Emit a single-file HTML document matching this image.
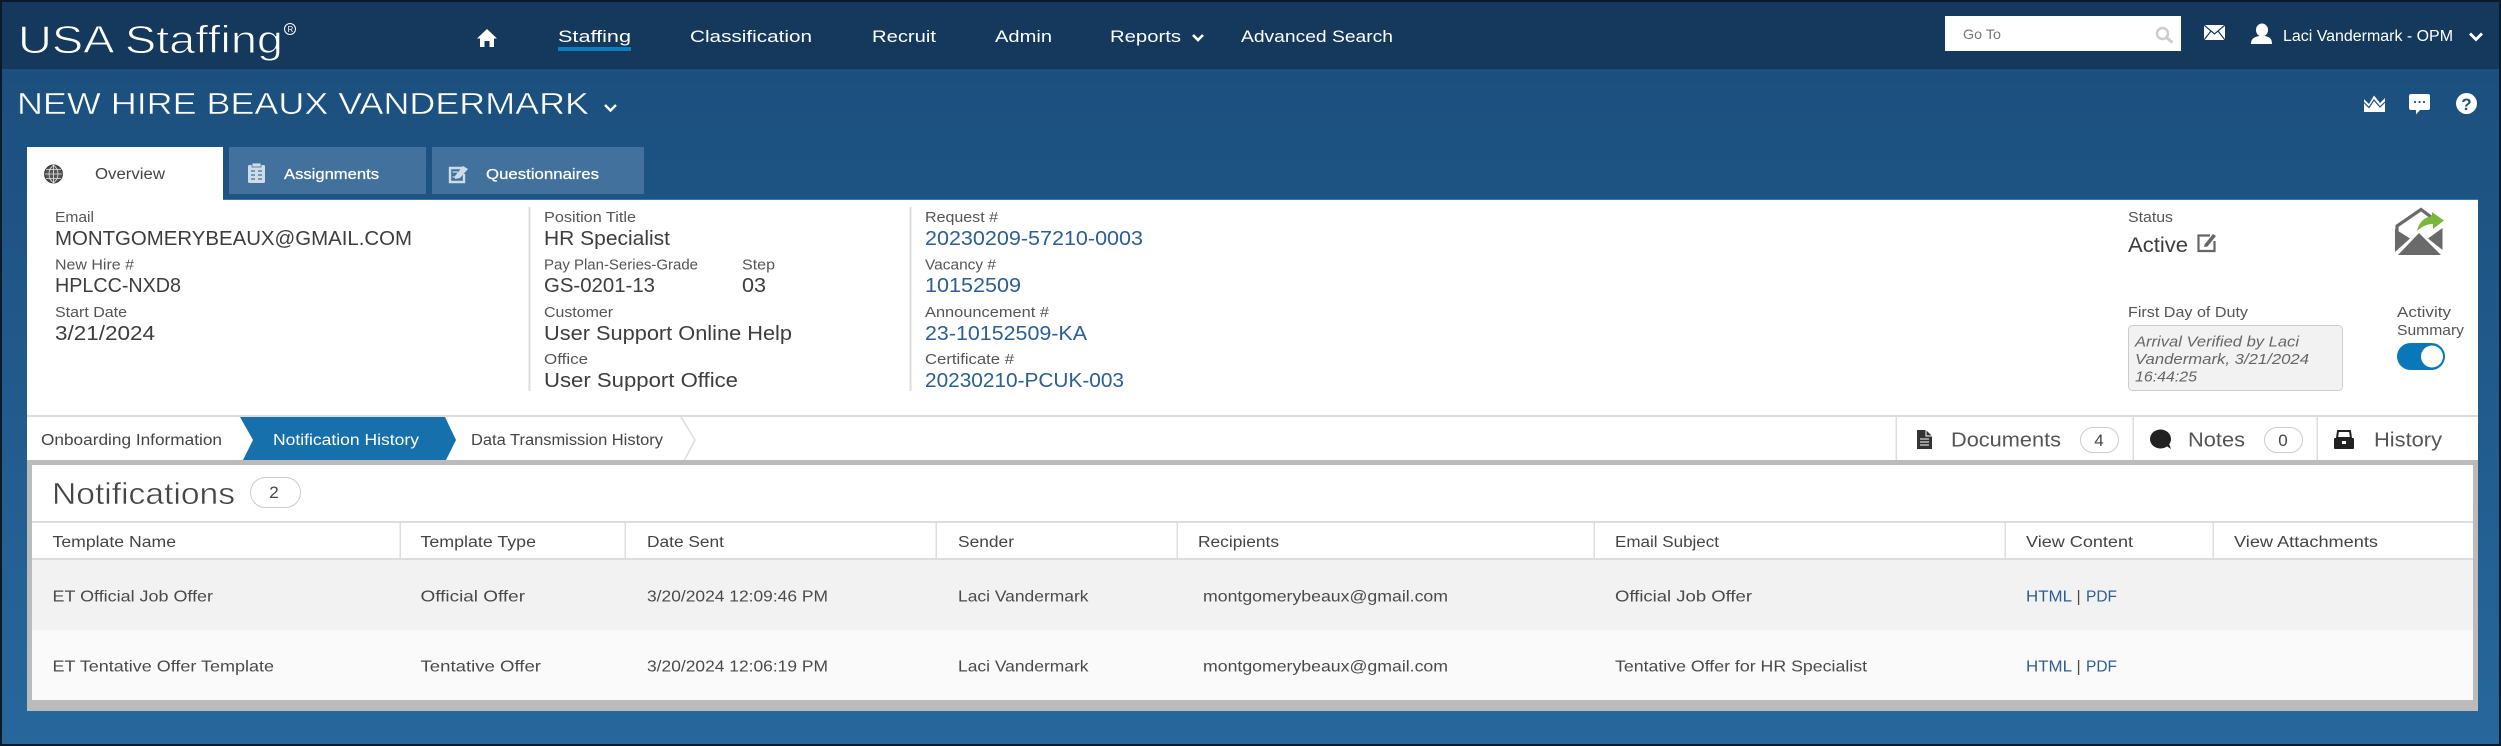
<!DOCTYPE html>
<html lang="en">
<head>
<meta charset="utf-8">
<title>USA Staffing - New Hire</title>
<style>
html,body{margin:0;padding:0;background:#000;width:2501px;height:746px;overflow:hidden}
svg{display:block}
text{font-family:"Liberation Sans",sans-serif;white-space:pre}
.nav{font-size:17px;fill:#fff}
.lb{font-size:14.5px;fill:#555}
.val{font-size:20px;fill:#3d3d3d}
.lnk{font-size:20px;fill:#2c5f92}
.th{font-size:15.5px;fill:#444}
.td{font-size:16px;fill:#4a4a4a}
.a{font-size:16px;fill:#2c5f92}
.bc{font-size:15.5px;fill:#444}
.tab{font-size:15px;fill:#fff;stroke:#fff;stroke-width:.25}
.it{font-size:15px;fill:#666;font-style:italic}
.rt{font-size:20px;fill:#555}
.bd{font-size:17px;fill:#444;text-anchor:middle}
</style>
</head>
<body>
<svg xmlns="http://www.w3.org/2000/svg" width="2501" height="746" viewBox="0 0 2501 746">
<defs>
<linearGradient id="bg" x1="0" y1="0" x2="0" y2="1"><stop offset="0" stop-color="#1b4f7e"/><stop offset="1" stop-color="#27679b"/></linearGradient>
</defs>
<rect width="2501" height="746" fill="#0a1a28"/>
<rect x="2" y="69" width="2497" height="675" fill="url(#bg)"/>
<rect x="2" y="2" width="2497" height="67" fill="#14395c"/>

<!-- logo -->
<text x="18" y="53" font-size="39" fill="#fff" stroke="#14395c" stroke-width=".9" textLength="265" lengthAdjust="spacingAndGlyphs">USA Staffing</text>
<circle cx="290" cy="29" r="5.5" fill="none" stroke="#fff" stroke-width="1"/>
<text x="287.5" y="32" font-size="8" fill="#fff">R</text>

<!-- nav -->
<path d="M487 29 L497 38.5 L494 38.5 L494 47 L489.5 47 L489.5 41 L484.5 41 L484.5 47 L480 47 L480 38.5 L477 38.5Z" fill="#fff"/>
<text class="nav" x="558" y="42" textLength="73" lengthAdjust="spacingAndGlyphs">Staffing</text>
<rect x="558" y="47" width="73" height="4" fill="#0a7fc4"/>
<text class="nav" x="690" y="42" textLength="122" lengthAdjust="spacingAndGlyphs">Classification</text>
<text class="nav" x="872" y="42" textLength="64" lengthAdjust="spacingAndGlyphs">Recruit</text>
<text class="nav" x="995" y="42" textLength="57" lengthAdjust="spacingAndGlyphs">Admin</text>
<text class="nav" x="1110" y="42" textLength="71" lengthAdjust="spacingAndGlyphs">Reports</text>
<path d="M1193 35 L1198 40 L1203 35" fill="none" stroke="#fff" stroke-width="2.6"/>
<text class="nav" x="1241" y="42" textLength="152" lengthAdjust="spacingAndGlyphs">Advanced Search</text>

<!-- search -->
<rect x="1945" y="16" width="236" height="35" fill="#fff"/>
<text x="1963" y="39" font-size="14" fill="#777" textLength="38" lengthAdjust="spacingAndGlyphs">Go To</text>
<circle cx="2162.5" cy="33.5" r="5.5" fill="none" stroke="#ccc" stroke-width="2.4"/>
<path d="M2167 38 L2172.5 42.5" stroke="#ccc" stroke-width="3"/>

<!-- mail -->
<rect x="2204" y="25" width="21" height="15" fill="#fff"/>
<path d="M2204 25 L2214.5 34 L2225 25 M2204 40 L2211 31 M2225 40 L2218 31" fill="none" stroke="#14395c" stroke-width="1.2"/>
<!-- user -->
<ellipse cx="2262" cy="30" rx="6" ry="6.5" fill="#fff"/>
<path d="M2251 44 C2251 38 2255 37 2259 36 L2265 36 C2269 37 2272 38 2272 44Z" fill="#fff"/>
<text x="2283" y="41" font-size="15.5" fill="#fff" textLength="170" lengthAdjust="spacingAndGlyphs">Laci Vandermark - OPM</text>
<path d="M2470 33.5 L2476 39.5 L2482 33.5" fill="none" stroke="#fff" stroke-width="2.8"/>

<!-- title -->
<text x="17" y="114" font-size="31" fill="#fff" stroke="#1c527f" stroke-width=".5" textLength="572" lengthAdjust="spacingAndGlyphs">NEW HIRE BEAUX VANDERMARK</text>
<path d="M605 105 L610.5 110.5 L616 105" fill="none" stroke="#fff" stroke-width="2.4"/>

<!-- page icons -->
<path d="M2364 99 L2369 104 L2374 95.5 L2380 103 L2385 98 L2385 112 L2364 112Z" fill="#fff"/>
<path d="M2364 102.5 L2369 107.5 L2374 100 L2380 107 L2385 102" fill="none" stroke="#1c527f" stroke-width="1.2"/>
<path d="M2411 94 H2428 Q2430 94 2430 96 V108 Q2430 110 2428 110 H2420 L2416 114.5 V110 H2411 Q2409 110 2409 108 V96 Q2409 94 2411 94Z" fill="#fff"/>
<circle cx="2415" cy="102" r="1.1" fill="#1c527f"/><circle cx="2419.5" cy="102" r="1.1" fill="#1c527f"/><circle cx="2424" cy="102" r="1.1" fill="#1c527f"/>
<circle cx="2466.5" cy="103.5" r="10.5" fill="#fff"/>
<text x="2466.5" y="110" font-size="17" font-weight="bold" fill="#1c527f" text-anchor="middle">?</text>

<!-- tabs -->
<rect x="27" y="147" width="196" height="54" fill="#fff"/>
<rect x="229" y="147" width="197" height="47" fill="#41719c"/>
<rect x="432" y="147" width="212" height="47" fill="#41719c"/>
<g fill="none" stroke="#3a3a3a" stroke-width="1.3">
<circle cx="53.5" cy="174" r="8.8" fill="#555"/>
<path d="M44.7 174 H62.3 M46 169.5 H61 M46 178.5 H61 M53.5 165 V183 M53.5 165 C47.5 170 47.5 178 53.5 183 M53.5 165 C59.5 170 59.5 178 53.5 183" stroke="#e8e8e8" stroke-width=".8"/>
</g>
<text class="bc" x="95" y="179" textLength="70" lengthAdjust="spacingAndGlyphs">Overview</text>
<rect x="248" y="165" width="17" height="18" rx="1.5" fill="#cfdbe6"/>
<rect x="252" y="163" width="9" height="4" fill="#cfdbe6" stroke="#41719c" stroke-width=".8"/>
<path d="M251 171 H255 M258 171 H262 M251 175 H255 M258 175 H262 M251 179 H255 M258 179 H262" stroke="#41719c" stroke-width="1.2"/>
<text class="tab" x="284" y="179" textLength="95" lengthAdjust="spacingAndGlyphs">Assignments</text>
<path d="M464 168 H450 V182 H464 V174" fill="none" stroke="#cfdbe6" stroke-width="2.4"/>
<path d="M455 176 L463 166 L468 169 L460 178 L455 179Z" fill="#cfdbe6"/>
<path d="M452.5 172 H458 M452.5 177 H455" stroke="#cfdbe6" stroke-width="1.2"/>
<text class="tab" x="486" y="179" textLength="113" lengthAdjust="spacingAndGlyphs">Questionnaires</text>

<!-- panel -->
<rect x="223" y="199" width="2255" height="1" fill="#3f74a3"/>
<rect x="27" y="200" width="2451" height="260" fill="#fff"/>
<rect x="27" y="460" width="2451" height="251" fill="#bbbbbb"/>
<rect x="32" y="465" width="2441" height="235" fill="#fff"/>
<rect x="27" y="415" width="2451" height="2" fill="#dcdcdc"/>

<!-- col 1 -->
<text class="lb" x="55" y="222" textLength="39" lengthAdjust="spacingAndGlyphs">Email</text>
<text class="val" x="55" y="245" textLength="357" lengthAdjust="spacingAndGlyphs">MONTGOMERYBEAUX@GMAIL.COM</text>
<text class="lb" x="55" y="269.5" textLength="79" lengthAdjust="spacingAndGlyphs">New Hire #</text>
<text class="val" x="55" y="292" textLength="126" lengthAdjust="spacingAndGlyphs">HPLCC-NXD8</text>
<text class="lb" x="55" y="317" textLength="72" lengthAdjust="spacingAndGlyphs">Start Date</text>
<text class="val" x="55" y="340" textLength="100" lengthAdjust="spacingAndGlyphs">3/21/2024</text>

<rect x="528.5" y="207" width="2" height="184" fill="#ddd"/>
<!-- col 2 -->
<text class="lb" x="544" y="222" textLength="92" lengthAdjust="spacingAndGlyphs">Position Title</text>
<text class="val" x="544" y="245" textLength="126" lengthAdjust="spacingAndGlyphs">HR Specialist</text>
<text class="lb" x="544" y="269.5" textLength="154" lengthAdjust="spacingAndGlyphs">Pay Plan-Series-Grade</text>
<text class="val" x="544" y="292" textLength="111" lengthAdjust="spacingAndGlyphs">GS-0201-13</text>
<text class="lb" x="742" y="269.5" textLength="33" lengthAdjust="spacingAndGlyphs">Step</text>
<text class="val" x="742" y="292" textLength="24" lengthAdjust="spacingAndGlyphs">03</text>
<text class="lb" x="544" y="317" textLength="69" lengthAdjust="spacingAndGlyphs">Customer</text>
<text class="val" x="544" y="340" textLength="248" lengthAdjust="spacingAndGlyphs">User Support Online Help</text>
<text class="lb" x="544" y="364" textLength="44" lengthAdjust="spacingAndGlyphs">Office</text>
<text class="val" x="544" y="387" textLength="194" lengthAdjust="spacingAndGlyphs">User Support Office</text>

<rect x="909.5" y="207" width="2" height="184" fill="#ddd"/>
<!-- col 3 -->
<text class="lb" x="925" y="222" textLength="73" lengthAdjust="spacingAndGlyphs">Request #</text>
<text class="lnk" x="925" y="245" textLength="218" lengthAdjust="spacingAndGlyphs">20230209-57210-0003</text>
<text class="lb" x="925" y="269.5" textLength="71" lengthAdjust="spacingAndGlyphs">Vacancy #</text>
<text class="lnk" x="925" y="292" textLength="96" lengthAdjust="spacingAndGlyphs">10152509</text>
<text class="lb" x="925" y="317" textLength="124" lengthAdjust="spacingAndGlyphs">Announcement #</text>
<text class="lnk" x="925" y="340" textLength="162" lengthAdjust="spacingAndGlyphs">23-10152509-KA</text>
<text class="lb" x="925" y="364" textLength="89" lengthAdjust="spacingAndGlyphs">Certificate #</text>
<text class="lnk" x="925" y="387" textLength="199" lengthAdjust="spacingAndGlyphs">20230210-PCUK-003</text>

<!-- status -->
<text class="lb" x="2128" y="222" textLength="45" lengthAdjust="spacingAndGlyphs">Status</text>
<text x="2128" y="252" font-size="21" fill="#3d3d3d" textLength="60" lengthAdjust="spacingAndGlyphs">Active</text>
<path d="M2210 235.5 H2198.5 V251 H2214.5 V241" fill="none" stroke="#666" stroke-width="2.2"/>
<path d="M2204.5 244.5 L2213 234 L2216 236 L2207.5 246.5 L2204 247Z" fill="#666"/>

<!-- envelope logo -->
<path d="M2397 231 V226 L2421 209.5 L2431 217" fill="none" stroke="#6a6a6a" stroke-width="3.2"/>
<path d="M2395 229 L2410 238.5 L2395 252Z M2442.5 228 V250 L2428 238.5Z M2419 233 L2441 255 H2398Z" fill="#6a6a6a"/>
<path d="M2417 231 C2419 222 2425 216.5 2432 216.5 L2432 212 L2444 220.5 L2433 229 L2433 224 C2427 224 2422 226.5 2417 231Z" fill="#7cb63f"/>

<text class="lb" x="2128" y="317" textLength="120" lengthAdjust="spacingAndGlyphs">First Day of Duty</text>
<rect x="2128.5" y="325.5" width="214" height="65" rx="4" fill="#f2f2f2" stroke="#ccc"/>
<text class="it" x="2135" y="346.5" textLength="164" lengthAdjust="spacingAndGlyphs">Arrival Verified by Laci</text>
<text class="it" x="2135" y="364" textLength="174" lengthAdjust="spacingAndGlyphs">Vandermark, 3/21/2024</text>
<text class="it" x="2135" y="381.5" textLength="62" lengthAdjust="spacingAndGlyphs">16:44:25</text>
<text class="lb" x="2397" y="317" textLength="54" lengthAdjust="spacingAndGlyphs">Activity</text>
<text class="lb" x="2397" y="335" textLength="67" lengthAdjust="spacingAndGlyphs">Summary</text>
<rect x="2397" y="343" width="48" height="27" rx="13.5" fill="#0a77b8"/>
<circle cx="2432" cy="356.5" r="11" fill="#fff"/>

<!-- breadcrumbs -->
<text class="bc" x="41" y="445" textLength="181" lengthAdjust="spacingAndGlyphs">Onboarding Information</text>
<path d="M240 417 H445 L456 440 L446 460 H243 L253 440Z" fill="#1570ab"/>
<text class="bc" style="fill:#fff" x="273" y="445" textLength="146" lengthAdjust="spacingAndGlyphs">Notification History</text>
<text class="bc" x="471" y="445" textLength="192" lengthAdjust="spacingAndGlyphs">Data Transmission History</text>
<path d="M681 417 L695 440 L684.5 460" fill="none" stroke="#ddd" stroke-width="1.5"/>

<!-- right tabs -->
<rect x="1895.5" y="417" width="1.5" height="43" fill="#ddd"/>
<rect x="2132.5" y="417" width="1.5" height="43" fill="#ddd"/>
<rect x="2316.5" y="417" width="1.5" height="43" fill="#ddd"/>
<path d="M1917 430 H1926 L1932 436 V449 H1917Z" fill="#333"/>
<path d="M1926 430 V436 H1932" fill="none" stroke="#fff" stroke-width="1"/>
<path d="M1920 439 H1929 M1920 442 H1929 M1920 445 H1929" stroke="#fff" stroke-width="1"/>
<text class="rt" x="1951" y="446.5" textLength="110" lengthAdjust="spacingAndGlyphs">Documents</text>
<rect x="2080.5" y="427.5" width="38" height="25" rx="12.5" fill="#fff" stroke="#ccc"/>
<text class="bd" x="2099" y="446">4</text>
<ellipse cx="2160.5" cy="439" rx="10.5" ry="9.5" fill="#222"/>
<path d="M2165 445 L2171 449 L2168 441Z" fill="#222"/>
<text class="rt" x="2188" y="446.5" textLength="57" lengthAdjust="spacingAndGlyphs">Notes</text>
<rect x="2264.5" y="427.5" width="38" height="25" rx="12.5" fill="#fff" stroke="#ccc"/>
<text class="bd" x="2283" y="446">0</text>
<path d="M2338 431 H2350 L2351 438 H2337Z" fill="none" stroke="#222" stroke-width="2"/>
<rect x="2334" y="438" width="20" height="11" rx="1" fill="#222"/>
<rect x="2342" y="441" width="4" height="3" fill="#fff"/>
<text class="rt" x="2374" y="446.5" textLength="68" lengthAdjust="spacingAndGlyphs">History</text>

<!-- notifications -->
<text x="52" y="504" font-size="31" fill="#444" stroke="#fff" stroke-width=".5" textLength="183" lengthAdjust="spacingAndGlyphs">Notifications</text>
<rect x="250.5" y="477.5" width="50" height="30" rx="15" fill="#fff" stroke="#ccc"/>
<text class="bd" x="274" y="498">2</text>

<rect x="32" y="521" width="2441" height="2" fill="#ddd"/>
<rect x="32" y="558" width="2441" height="2" fill="#ddd"/>
<g fill="#ddd">
<rect x="399.5" y="523" width="1.5" height="35"/>
<rect x="624.5" y="523" width="1.5" height="35"/>
<rect x="935.5" y="523" width="1.5" height="35"/>
<rect x="1176.5" y="523" width="1.5" height="35"/>
<rect x="1593.5" y="523" width="1.5" height="35"/>
<rect x="2004.5" y="523" width="1.5" height="35"/>
<rect x="2212.5" y="523" width="1.5" height="35"/>
</g>
<text class="th" x="52.5" y="547" textLength="123.5" lengthAdjust="spacingAndGlyphs">Template Name</text>
<text class="th" x="420.5" y="547" textLength="115.5" lengthAdjust="spacingAndGlyphs">Template Type</text>
<text class="th" x="647" y="547" textLength="77" lengthAdjust="spacingAndGlyphs">Date Sent</text>
<text class="th" x="958" y="547" textLength="56" lengthAdjust="spacingAndGlyphs">Sender</text>
<text class="th" x="1198" y="547" textLength="81" lengthAdjust="spacingAndGlyphs">Recipients</text>
<text class="th" x="1615" y="547" textLength="104" lengthAdjust="spacingAndGlyphs">Email Subject</text>
<text class="th" x="2026" y="547" textLength="107" lengthAdjust="spacingAndGlyphs">View Content</text>
<text class="th" x="2234" y="547" textLength="144" lengthAdjust="spacingAndGlyphs">View Attachments</text>

<rect x="32" y="560" width="2441" height="70" fill="#f2f2f2"/>
<rect x="32" y="630" width="2441" height="70" fill="#fafafa"/>

<text class="td" x="52.5" y="601.5" textLength="160.5" lengthAdjust="spacingAndGlyphs">ET Official Job Offer</text>
<text class="td" x="420.5" y="601.5" textLength="104.5" lengthAdjust="spacingAndGlyphs">Official Offer</text>
<text class="td" x="647" y="601.5" textLength="181" lengthAdjust="spacingAndGlyphs">3/20/2024 12:09:46 PM</text>
<text class="td" x="958" y="601.5" textLength="130.5" lengthAdjust="spacingAndGlyphs">Laci Vandermark</text>
<text class="td" x="1203" y="601.5" textLength="245" lengthAdjust="spacingAndGlyphs">montgomerybeaux@gmail.com</text>
<text class="td" x="1615" y="601.5" textLength="137" lengthAdjust="spacingAndGlyphs">Official Job Offer</text>
<text class="a" x="2026" y="601.5" textLength="46" lengthAdjust="spacingAndGlyphs">HTML</text>
<text class="td" x="2076.5" y="601.5">|</text>
<text class="a" x="2086" y="601.5" textLength="31" lengthAdjust="spacingAndGlyphs">PDF</text>

<text class="td" x="52.5" y="671.5" textLength="221.5" lengthAdjust="spacingAndGlyphs">ET Tentative Offer Template</text>
<text class="td" x="420.5" y="671.5" textLength="120.5" lengthAdjust="spacingAndGlyphs">Tentative Offer</text>
<text class="td" x="647" y="671.5" textLength="181" lengthAdjust="spacingAndGlyphs">3/20/2024 12:06:19 PM</text>
<text class="td" x="958" y="671.5" textLength="130.5" lengthAdjust="spacingAndGlyphs">Laci Vandermark</text>
<text class="td" x="1203" y="671.5" textLength="245" lengthAdjust="spacingAndGlyphs">montgomerybeaux@gmail.com</text>
<text class="td" x="1615" y="671.5" textLength="252" lengthAdjust="spacingAndGlyphs">Tentative Offer for HR Specialist</text>
<text class="a" x="2026" y="671.5" textLength="46" lengthAdjust="spacingAndGlyphs">HTML</text>
<text class="td" x="2076.5" y="671.5">|</text>
<text class="a" x="2086" y="671.5" textLength="31" lengthAdjust="spacingAndGlyphs">PDF</text>
</svg>
</body>
</html>
